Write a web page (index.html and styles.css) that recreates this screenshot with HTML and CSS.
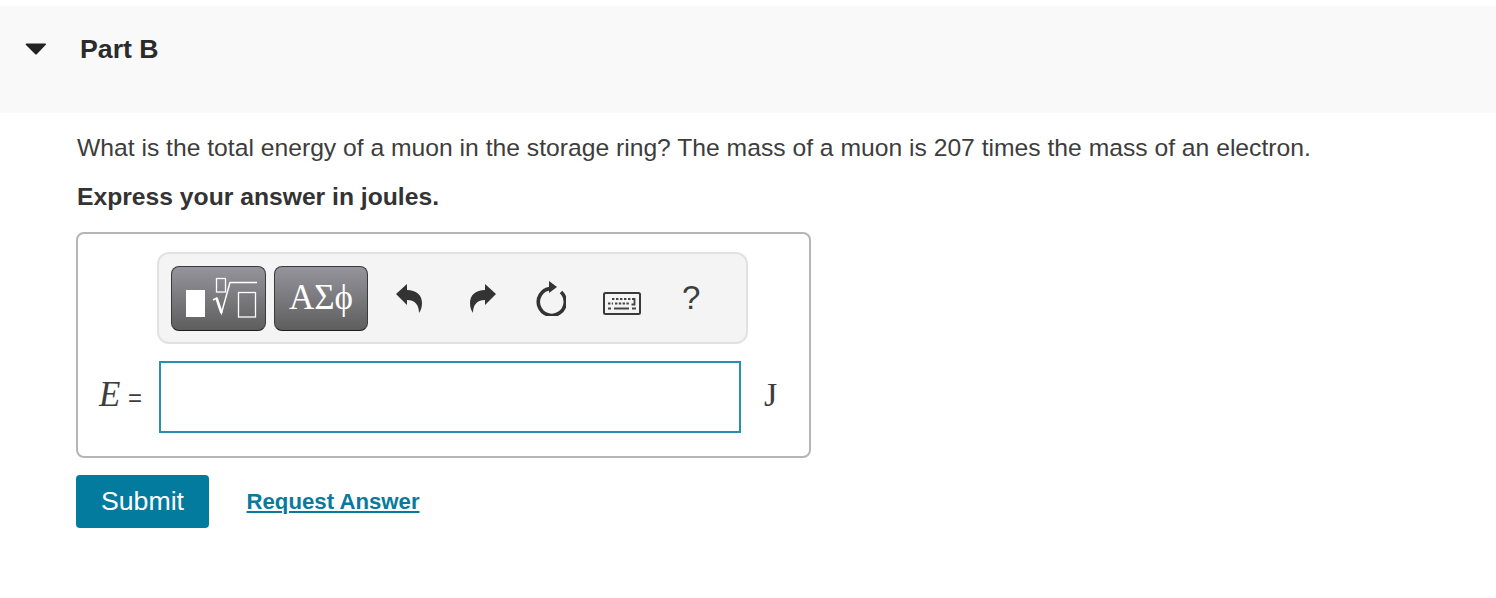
FILE: index.html
```html
<!DOCTYPE html>
<html lang="en">

<head>
    <meta charset="UTF-8">
    <title>Part B</title>
    <link rel="stylesheet" href="styles.css">
</head>

<body>
    <div class="part-header">
        <svg class="caret" width="22" height="12" viewBox="0 0 22 12"><path d="M0.5 1.5 Q0.5 0.5 2 0.5 H20 Q21.5 0.5 21 1.5 L12 11 Q11 12 10 11 Z" fill="#222"/></svg>
        <h2>Part B</h2>
    </div>

    <div class="part-body">
        <p class="question">What is the total energy of a muon in the storage ring? The mass of a muon is 207 times the mass of an electron.</p>
        <p class="instruction">Express your answer in joules.</p>

        <div class="answer-box">
            <div class="toolbar">
                <button class="tool-btn templates" type="button">
                    <svg width="93" height="63" viewBox="0 0 93 63">
                        <rect x="14" y="23" width="19" height="27" fill="#fff"/>
                        <rect x="44.5" y="11.5" width="9" height="13.5" fill="none" stroke="#fff" stroke-width="1.3"/>
                        <path d="M41 33 L44.5 31 L49.5 46 L58 15.5 H85" fill="none" stroke="#fff" stroke-width="1.5"/>
                        <path d="M44.5 31 L49.5 46" fill="none" stroke="#fff" stroke-width="2.6"/>
                        <rect x="66.5" y="25.5" width="17" height="24.5" fill="none" stroke="#fff" stroke-width="1.3"/>
                    </svg>
                </button>
                <button class="tool-btn symbols" type="button">&Alpha;&Sigma;&#981;</button>
                <div class="tool-icons">
                    <svg class="icon-undo" width="28" height="32" viewBox="0 0 28 32"><path d="M1 12 L12 2 V8 C21 8 27 13 27 21 C27 25 26 28 24 31 C24 24 21 18 12 18 V23 Z" fill="#333"/></svg>
                    <svg class="icon-redo" width="28" height="32" viewBox="0 0 28 32"><path d="M27 12 L16 2 V8 C7 8 1 13 1 21 C1 25 2 28 4 31 C4 24 7 18 16 18 V23 Z" fill="#333"/></svg>
                    <svg class="icon-reset" width="34" height="36" viewBox="0 0 34 36"><path d="M18 8.5 A13.5 13.5 0 1 0 29 12" fill="none" stroke="#333" stroke-width="3.6"/><path d="M17 1 L25 7 L17 13 Z" fill="#333"/></svg>
                    <svg class="icon-keyboard" width="38" height="23" viewBox="0 0 38 23">
                        <rect x="1" y="1" width="36" height="21" rx="1.5" fill="#f4f4f4" stroke="#3a3a3a" stroke-width="2"/>
                        <path d="M9 7 H31" stroke="#444" stroke-width="1.8" stroke-dasharray="2.4 1.6" fill="none"/>
                        <path d="M5 11.5 H10 M12 11.5 H27" stroke="#444" stroke-width="1.8" stroke-dasharray="2.4 1.4" fill="none"/>
                        <path d="M31.5 6 V12.5 H28.5" stroke="#444" stroke-width="1.8" fill="none"/>
                        <path d="M5 16.5 H8 M11 16.5 H26 M29 16.5 H33" stroke="#444" stroke-width="1.8" fill="none"/>
                    </svg>
                    <span class="help">?</span>
                </div>
            </div>

            <div class="answer-row">
                <span class="label"><i>E</i> <span class="equals">=</span></span>
                <input class="answer-input" type="text">
                <span class="unit">J</span>
            </div>
        </div>

        <div class="actions">
            <button class="submit" type="button">Submit</button>
            <a class="request" href="#">Request Answer</a>
        </div>
    </div>
</body>

</html>
```

FILE: styles.css
```css
body {
    font-family: "Liberation Sans", Arial, sans-serif;
    margin: 0;
    padding: 6px 0 0;
    background-color: white;
    color: #3d3d3d;
}

.part-header {
    display: flex;
    align-items: flex-start;
    height: 107px;
    padding-left: 25px;
    background-color: #f9f9f9;
}

.caret {
    margin-top: 37px;
}

.part-header h2 {
    margin: 27px 0 0 33px;
    font-size: 26.7px;
    line-height: 32px;
    font-weight: bold;
    color: #2b2b2b;
}

.part-body {
    padding-left: 76px;
}

.question {
    margin: 0 0 0 1px;
    padding-top: 19px;
    font-size: 24.68px;
    line-height: 32px;
}

.instruction {
    margin: 17px 0 0 1px;
    font-size: 24.68px;
    line-height: 32px;
    font-weight: bold;
    color: #333;
}

.answer-box {
    box-sizing: border-box;
    width: 735px;
    height: 226px;
    margin-top: 19px;
    padding: 18px 0 0 79px;
    border: 2px solid #b5b5b5;
    border-radius: 8px;
}

.toolbar {
    box-sizing: border-box;
    display: flex;
    align-items: center;
    width: 591px;
    height: 92px;
    padding-left: 12px;
    background-color: #f4f4f4;
    border: 2px solid #e2e2e2;
    border-radius: 12px;
}

.tool-btn {
    box-sizing: border-box;
    height: 65px;
    padding: 0;
    border: 1px solid #3a3a3a;
    border-bottom-color: #1c1c1c;
    border-radius: 8px;
    background: linear-gradient(#95949c, #5e5e5e);
    color: white;
}

.templates {
    width: 95px;
    display: flex;
    align-items: center;
    justify-content: center;
}

.symbols {
    width: 94px;
    margin-left: 8px;
    font-family: "Liberation Serif", serif;
    font-size: 35px;
}

.tool-icons {
    display: flex;
    align-items: center;
}

.icon-undo {
    margin-left: 27px;
}

.icon-redo {
    margin-left: 46px;
}

.icon-reset {
    margin-left: 35px;
}

.icon-keyboard {
    margin-left: 37px;
    margin-top: 11px;
}

.help {
    margin-left: 41px;
    font-size: 33px;
    line-height: 40px;
}

.answer-row {
    display: flex;
    align-items: center;
    margin-top: 17px;
    margin-left: -57px;
}

.label {
    width: 59px;
    margin-top: -5px;
    font-size: 24px;
    white-space: nowrap;
}

.label i {
    font-family: "Liberation Serif", serif;
    font-size: 35px;
    margin-left: -1px;
}

.equals {
    margin-left: 1px;
    font-size: 24px;
}

.answer-input {
    box-sizing: border-box;
    width: 582px;
    height: 72px;
    border: 2px solid #2a8fae;
    background-color: white;
}

.unit {
    margin-top: -4px;
    margin-left: 23px;
    font-family: "Liberation Serif", serif;
    font-size: 34px;
}

.actions {
    display: flex;
    align-items: center;
    margin-top: 17px;
}

.submit {
    width: 133px;
    height: 53px;
    padding: 0;
    border: none;
    border-radius: 4px;
    background-color: #037b9e;
    color: white;
    font-family: inherit;
    font-size: 26.7px;
}

.request {
    margin-left: 37.5px;
    font-size: 22.2px;
    font-weight: bold;
    color: #0a7a9c;
}
```
